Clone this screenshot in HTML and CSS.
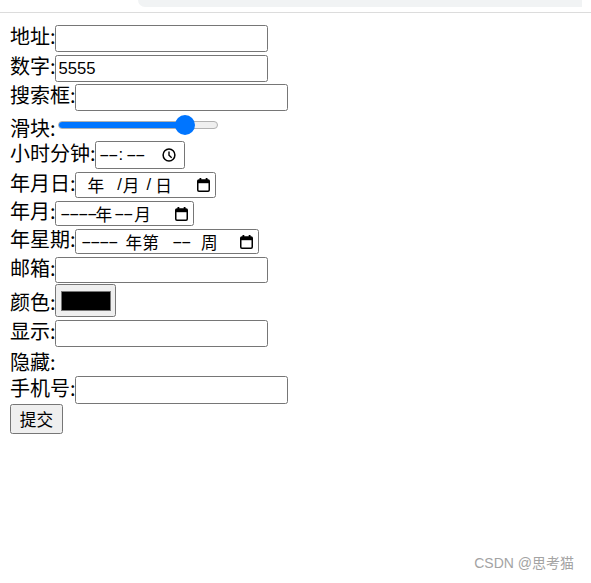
FILE: index.html
```html
<!DOCTYPE html>
<html lang="zh-CN">
<head>
<meta charset="utf-8">
<title>表单</title>
<link rel="stylesheet" href="styles.css">
</head>
<body>
<div class="chrome"><div class="tab"></div></div>
<form class="form">
  <div class="row row-tight3"><span class="label">地址:</span><input class="field w213 h27" type="text"></div>
  <div class="row row-tight2"><span class="label">数字:</span><input class="field w213 h27" type="text" value="5555"></div>
  <div class="row"><span class="label">搜索框:</span><input class="field w213 h27" type="text"></div>
  <div class="row row-range"><span class="label">滑块:</span>
    <div class="slider"><div class="track"><div class="fill"></div></div><div class="thumb"></div></div>
  </div>
  <div class="row"><span class="label">小时分钟:</span>
    <div class="picker time">
      <span class="dash d2g t1">--</span><span class="colon">:</span><span class="dash d2g t2">--</span>
      <svg class="icon clock" width="14" height="14" viewBox="0 0 14 14"><circle cx="7" cy="7" r="5.9" fill="none" stroke="#000" stroke-width="1.5"/><path d="M7 3.4V7.2l2.7 2.6" fill="none" stroke="#000" stroke-width="1.4"/></svg>
    </div>
  </div>
  <div class="row"><span class="label">年月日:</span>
    <div class="picker date">
      <span class="cj d1">年</span><span class="sl d2">/</span><span class="cj d3">月</span><span class="sl d4">/</span><span class="cj d5">日</span>
      <svg class="icon cal" width="13" height="14" viewBox="0 0 13 14"><rect x="2.5" y="0" width="1.8" height="3"/><rect x="8.7" y="0" width="1.8" height="3"/><rect x="0.75" y="2" width="11.5" height="11.25" rx="1.2" fill="none" stroke="#000" stroke-width="1.5"/><rect x="0.75" y="2" width="11.5" height="3.2"/></svg>
    </div>
  </div>
  <div class="row"><span class="label">年月:</span>
    <div class="picker month">
      <span class="dash d4g m1">----</span><span class="cj">年</span><span class="dash d2g m2">--</span><span class="cj m3">月</span>
      <svg class="icon cal" width="13" height="14" viewBox="0 0 13 14"><rect x="2.5" y="0" width="1.8" height="3"/><rect x="8.7" y="0" width="1.8" height="3"/><rect x="0.75" y="2" width="11.5" height="11.25" rx="1.2" fill="none" stroke="#000" stroke-width="1.5"/><rect x="0.75" y="2" width="11.5" height="3.2"/></svg>
    </div>
  </div>
  <div class="row"><span class="label">年星期:</span>
    <div class="picker week">
      <span class="dash d4g k1">----</span><span class="cj k2">年</span><span class="cj">第</span><span class="dash d2g k3">--</span><span class="cj k4">周</span>
      <svg class="icon cal" width="13" height="14" viewBox="0 0 13 14"><rect x="2.5" y="0" width="1.8" height="3"/><rect x="8.7" y="0" width="1.8" height="3"/><rect x="0.75" y="2" width="11.5" height="11.25" rx="1.2" fill="none" stroke="#000" stroke-width="1.5"/><rect x="0.75" y="2" width="11.5" height="3.2"/></svg>
    </div>
  </div>
  <div class="row row-tight1"><span class="label">邮箱:</span><input class="field w213 h26" type="email"></div>
  <div class="row row-color"><span class="label">颜色:</span><div class="color"><span class="swatch"></span></div></div>
  <div class="row"><span class="label">显示:</span><input class="field w213 h27" type="text"></div>
  <div class="row row-hidden"><span class="label">隐藏:</span></div>
  <div class="row row-tight0"><span class="label">手机号:</span><input class="field w213 h28" type="tel"></div>
  <div class="row"><button class="submit" type="button">提交</button></div>
</form>
<div class="watermark">CSDN @思考猫</div>
</body>
</html>
```
FILE: styles.css
```css
html, body {
  margin: 0;
  padding: 0;
  background: #fff;
}
body {
  position: relative;
  width: 591px;
  height: 583px;
  overflow: hidden;
  font-family: "Noto Sans CJK SC", sans-serif;
  font-size: 20px;
  color: #000;
}
.chrome {
  height: 12px;
  border-bottom: 1px solid #dcdcdc;
}
.tab {
  margin-left: 138px;
  width: 444px;
  height: 6.5px;
  background: #f1f3f4;
  border-bottom-left-radius: 10px;
}
.form {
  padding: 12px 10px 0;
}
.row {
  display: flex;
  align-items: center;
  margin-bottom: 3px;
}
.row-tight2 { margin-bottom: 2px; }
.row-tight1 { margin-bottom: 1px; }
.row-tight0 { margin-bottom: 0; }
.label {
  line-height: 20px;
  margin-bottom: 5px;
  margin-right: -1px;
  white-space: nowrap;
}
.field {
  box-sizing: border-box;
  margin: 0;
  border: 1px solid #767676;
  border-radius: 2.5px;
  background: #fff;
  padding: 0 3px;
  font-family: "Liberation Sans", "Noto Sans CJK SC", sans-serif;
  font-size: 16.67px;
  color: #000;
  outline: none;
}
.w213 { width: 213px; }
.h26 { height: 26px; }
.h27 { height: 27px; }
.h28 { height: 28px; }

/* slider */
.row-range {
  height: 24px;
  align-items: flex-end;
}
.row-range .label { margin-bottom: 0; }
.slider {
  position: relative;
  width: 160px;
  height: 20px;
  margin-left: 3px;
  margin-bottom: 3px;
}
.track {
  margin-top: 6px;
  height: 8px;
  box-sizing: border-box;
  border: 1px solid #b2b2b2;
  border-radius: 4px;
  background: #efefef;
  overflow: hidden;
}
.fill {
  width: 127px;
  height: 8px;
  margin: -1px 0 0 -1px;
  background: #0075ff;
}
.thumb {
  position: absolute;
  left: 117px;
  top: 0;
  width: 20px;
  height: 20px;
  border-radius: 50%;
  background: #0075ff;
}

/* date/time pickers */
.picker {
  box-sizing: border-box;
  display: flex;
  align-items: center;
  border: 1px solid #767676;
  border-radius: 2.5px;
  background: #fff;
  font-family: "Liberation Sans", "Noto Sans CJK SC", sans-serif;
  font-size: 16.67px;
  line-height: 20px;
  white-space: pre;
}
.dash {
  display: inline-block;
  font-family: "Liberation Sans", sans-serif;
  font-size: 16.67px;
  letter-spacing: -0.8px;
  transform: scaleX(1.9);
  transform-origin: left center;
}
.d4g { margin-right: 17px; }
.d2g { margin-right: 8.5px; }
.colon {
  font-family: "Liberation Sans", sans-serif;
  font-size: 16.67px;
  margin-left: 2px;
}
.cj {
  font-family: "Noto Sans CJK SC", sans-serif;
  font-size: 16.67px;
}
.icon { margin-left: auto; flex: none; }
.time { width: 90px; height: 28px; }
.time .t1 { margin-left: 3px; }
.time .t2 { margin-left: 3px; }
.time .clock { margin-right: 8px; }
.date { width: 141px; height: 26px; }
.date .d1 { margin-left: 12px; }
.date .d2 { margin-left: 13px; }
.date .d3 { margin-left: 1px; }
.date .d4 { margin-left: 7px; }
.date .d5 { margin-left: 4px; }
.date .cal { margin-right: 5px; }
.month { width: 139px; height: 25px; }
.month .m1 { margin-left: 4px; }
.month .m2 { margin-left: 2px; }
.month .m3 { margin-left: 2px; }
.month .cal { margin-right: 5px; }
.week { width: 184px; height: 25px; }
.week .k1 { margin-left: 5px; }
.week .k2 { margin-left: 9px; }
.week .k3 { margin-left: 13px; }
.week .k4 { margin-left: 11px; }
.week .cal { margin-right: 5px; }

/* color */
.row-color .label { margin: 3px -1px 0 0; }
.color {
  box-sizing: border-box;
  display: flex;
  align-items: center;
  width: 61px;
  height: 33px;
  padding-left: 5px;
  border: 1px solid #767676;
  border-radius: 2.5px;
  background: #efefef;
}
.swatch {
  box-sizing: border-box;
  width: 50px;
  height: 20px;
  border: 1px solid #777;
  background: #000;
}

.row-hidden {
  height: 26px;
  margin-bottom: 0;
  align-items: flex-start;
}
.row-hidden .label {
  line-height: 24px;
  margin-bottom: 0;
}

.submit {
  box-sizing: border-box;
  width: 53px;
  height: 30px;
  margin: 0;
  padding: 0;
  border: 1px solid #767676;
  border-radius: 2.5px;
  background: #efefef;
  font-family: "Noto Sans CJK SC", sans-serif;
  font-size: 16.67px;
  color: #000;
}

.watermark {
  position: absolute;
  right: 17px;
  bottom: 13px;
  font-family: "Liberation Sans", "Noto Sans CJK SC", sans-serif;
  font-size: 14px;
  line-height: 14px;
  color: #a3a3a3;
}
```
